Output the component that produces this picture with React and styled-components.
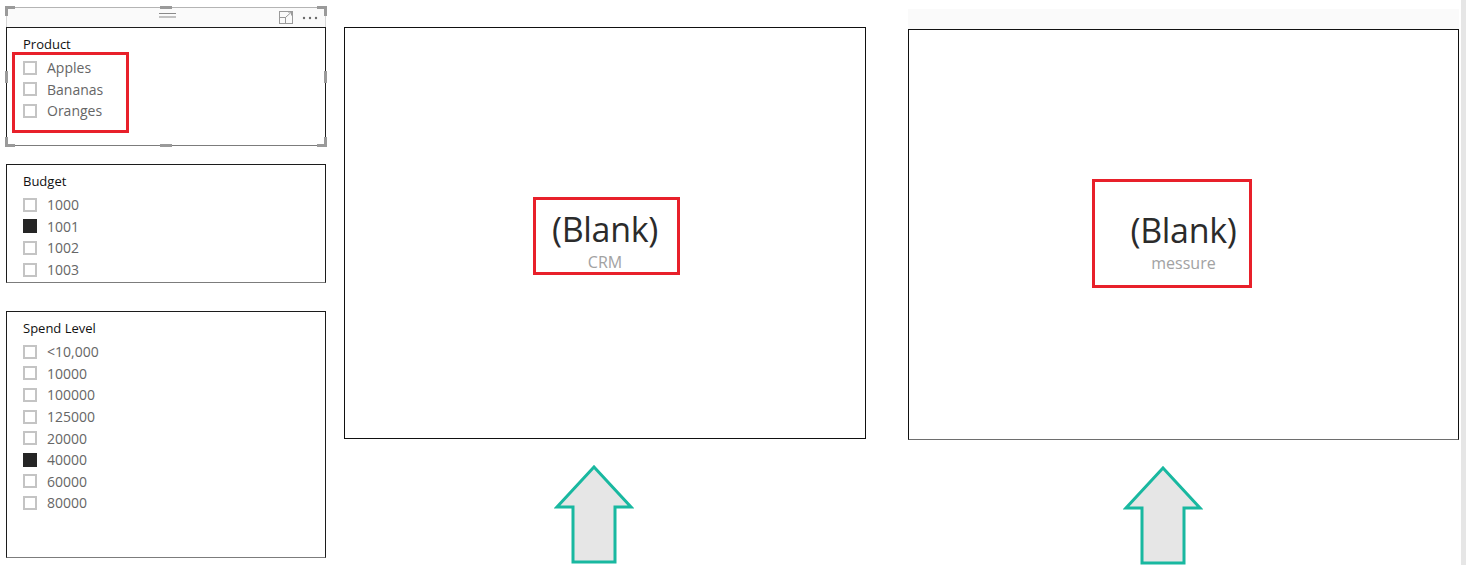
import React from 'react'
import styled, { createGlobalStyle } from 'styled-components'

const GlobalStyle = createGlobalStyle`
	html, body {
		margin: 0;
		padding: 0;
		background: #fff;
		overflow: hidden;
	}
	body {
		font-family: "Open Sans", "Noto Sans", Arial, sans-serif;
	}
`

const Page = styled.div`
	display: flex;
	align-items: flex-start;
	width: 1466px;
	height: 565px;
	padding-left: 6px;
	box-sizing: border-box;
	overflow: hidden;
`

const SlicerColumn = styled.div`
	display: flex;
	flex-direction: column;
	width: 320px;
	padding-top: 7px;
`

const VisualFrame = styled.div`
	position: relative;
	margin-bottom: ${ ({ gap }) => gap || 0 }px;
`

const FrameHeader = styled.div`
	position: relative;
	display: flex;
	align-items: center;
	justify-content: flex-end;
	gap: 9px;
	height: 20px;
	box-sizing: border-box;
	padding-right: 7px;
	background: #fafafa;
	border-top: 1px solid #b4b4b4;
	border-left: 1px solid #d6d6d6;
	border-right: 1px solid #d6d6d6;
`

const Grip = styled.svg`
	position: absolute;
	left: 152px;
	top: 5px;
`

const Handle = styled.span`
	position: absolute;
	background: #9a9a9a;
	z-index: 2;
	${ ({ spot }) => ({
		tl: 'left: -1px; top: -1px; width: 10px; height: 3px;',
		tlv: 'left: -1px; top: -1px; width: 3px; height: 10px;',
		tr: 'right: -1px; top: -1px; width: 10px; height: 3px;',
		trv: 'right: -1px; top: -1px; width: 3px; height: 10px;',
		bl: 'left: -1px; bottom: -1px; width: 10px; height: 3px;',
		blv: 'left: -1px; bottom: -1px; width: 3px; height: 10px;',
		br: 'right: -1px; bottom: -1px; width: 10px; height: 3px;',
		brv: 'right: -1px; bottom: -1px; width: 3px; height: 10px;',
		tm: 'left: 154px; top: -1px; width: 12px; height: 3px;',
		bm: 'left: 154px; bottom: -1px; width: 12px; height: 3px;',
		lm: 'left: -1px; top: 64px; width: 3px; height: 12px;',
		rm: 'right: -1px; top: 64px; width: 3px; height: 12px;',
	}[spot]) }
`

const SlicerBox = styled.div`
	position: relative;
	height: ${ ({ h }) => h }px;
	box-sizing: border-box;
	padding: 7px 16px 0;
	border: 1px solid #1c1c1c;
	border-bottom-color: ${ ({ shade }) => shade ? '#7c7c7c' : '#1c1c1c' };
	background: #fff;
	overflow: hidden;
`

const SlicerTitle = styled.div`
	font-size: 13px;
	line-height: 18px;
	color: #111;
`

const ItemList = styled.div`
	margin-top: 4px;
`

const Item = styled.div`
	display: flex;
	align-items: center;
	height: 21.6px;
	font-size: 14px;
	color: #666;
`

const Check = styled.span`
	width: 14px;
	height: 14px;
	box-sizing: border-box;
	margin-right: 10px;
	border: 2px solid ${ ({ on }) => on ? '#252525' : '#c4c4c4' };
	background: ${ ({ on }) => on ? '#252525' : '#fff' };
	flex-shrink: 0;
`

const Highlight = styled.div`
	position: absolute;
	left: ${ ({ x }) => x }px;
	top: ${ ({ y }) => y }px;
	width: ${ ({ w }) => w }px;
	height: ${ ({ h }) => h }px;
	box-sizing: border-box;
	border: 3px solid #e8202a;
	pointer-events: none;
`

const CardColumn = styled.div`
	display: flex;
	flex-direction: column;
	width: ${ ({ w }) => w }px;
	margin-left: ${ ({ gap }) => gap }px;
	padding-top: ${ ({ top }) => top }px;
`

const TopStrip = styled.div`
	height: 20px;
	background: #fafafa;
`

const Card = styled.div`
	position: relative;
	height: ${ ({ h }) => h }px;
	box-sizing: border-box;
	border: 1px solid #111;
	border-bottom-color: ${ ({ shade }) => shade ? '#6e6e6e' : '#111' };
	display: flex;
	flex-direction: column;
	align-items: center;
	justify-content: center;
`

const ValueBlock = styled.div`
	display: flex;
	flex-direction: column;
	align-items: center;
	padding-top: 17px;
`

const BigValue = styled.div`
	font-size: 34px;
	line-height: 40px;
	color: #2b2b2b;
	letter-spacing: -0.3px;
`

const ValueLabel = styled.div`
	font-size: 16px;
	line-height: 26px;
	color: #a2a2a2;
`

const ArrowRow = styled.div`
	display: flex;
	padding-left: ${ ({ offset }) => offset }px;
	margin-top: 26px;
`

const Scrollbar = styled.div`
	width: 5px;
	height: 565px;
	margin-left: 2px;
	background: #e6e6e6;
	flex-shrink: 0;
`

const UpArrow = () => (
	<svg width="80" height="100" viewBox="0 0 80 100">
		<polygon
			points="40,2 77,42 61,42 61,97 19,97 19,42 3,42"
			fill="#e6e6e6"
			stroke="#19b8a0"
			strokeWidth="3"
			strokeLinejoin="miter"
		/>
	</svg>
)

const FocusIcon = () => (
	<svg width="14" height="13" viewBox="0 0 14 13">
		<rect x="0.5" y="0.5" width="13" height="12" fill="none" stroke="#9a9a9a" strokeWidth="1" />
		<rect x="0.5" y="6.5" width="6" height="6" fill="none" stroke="#9a9a9a" strokeWidth="1" />
		<path d="M7 6 L12.5 1 M9 1 H12.5 V4.5" fill="none" stroke="#9a9a9a" strokeWidth="1" />
	</svg>
)

const Dots = () => (
	<svg width="16" height="4" viewBox="0 0 16 4">
		<circle cx="2" cy="2" r="1.2" fill="#6a6a6a" />
		<circle cx="8" cy="2" r="1.2" fill="#6a6a6a" />
		<circle cx="14" cy="2" r="1.2" fill="#6a6a6a" />
	</svg>
)

const slicers = [
	{ title: 'Budget', h: 119, gap: 28, items: [ ['1000'], ['1001', true], ['1002'], ['1003'] ] },
	{ title: 'Spend Level', h: 247, items: [ ['<10,000'], ['10000'], ['100000'], ['125000'], ['20000'], ['40000', true], ['60000'], ['80000'] ] },
]

const Slicer = ({ title, h, items, shade, children }) => (
	<SlicerBox h={h} shade={shade}>
		<SlicerTitle>{title}</SlicerTitle>
		<ItemList>
			{ items.map(([label, on]) => (
				<Item key={label}><Check on={on ? 1 : 0} />{label}</Item>
			)) }
		</ItemList>
		{children}
	</SlicerBox>
)

export default () => {
	return (
		<>
			<GlobalStyle />
			<Page>
				<SlicerColumn>
					<VisualFrame gap={18}>
						<FrameHeader>
							<Grip width="17" height="5" viewBox="0 0 17 5">
								<path d="M0 0.5 H17 M0 4 H17" stroke="#8a8a8a" strokeWidth="1" />
							</Grip>
							<FocusIcon />
							<Dots />
						</FrameHeader>
						<Slicer title="Product" h={119} items={[ ['Apples'], ['Bananas'], ['Oranges'] ]} shade>
							<Highlight x={5} y={24} w={117} h={81} />
						</Slicer>
						{ ['tl', 'tlv', 'tr', 'trv', 'bl', 'blv', 'br', 'brv', 'tm', 'bm', 'lm', 'rm'].map(s => (
							<Handle key={s} spot={s} />
						)) }
					</VisualFrame>
					{ slicers.map(s => (
						<VisualFrame key={s.title} gap={s.gap}>
							<Slicer {...s} shade />
						</VisualFrame>
					)) }
				</SlicerColumn>

				<CardColumn w={522} gap={18} top={27}>
					<Card h={412}>
						<ValueBlock>
							<BigValue>(Blank)</BigValue>
							<ValueLabel>CRM</ValueLabel>
						</ValueBlock>
						<Highlight x={188} y={169} w={147} h={78} />
					</Card>
					<ArrowRow offset={210}>
						<UpArrow />
					</ArrowRow>
				</CardColumn>

				<CardColumn w={551} gap={42} top={9}>
					<TopStrip />
					<Card h={411} shade>
						<ValueBlock>
							<BigValue>(Blank)</BigValue>
							<ValueLabel>messure</ValueLabel>
						</ValueBlock>
						<Highlight x={183} y={149} w={160} h={109} />
					</Card>
					<ArrowRow offset={215}>
						<UpArrow />
					</ArrowRow>
				</CardColumn>

				<Scrollbar />
			</Page>
		</>
	)
}
